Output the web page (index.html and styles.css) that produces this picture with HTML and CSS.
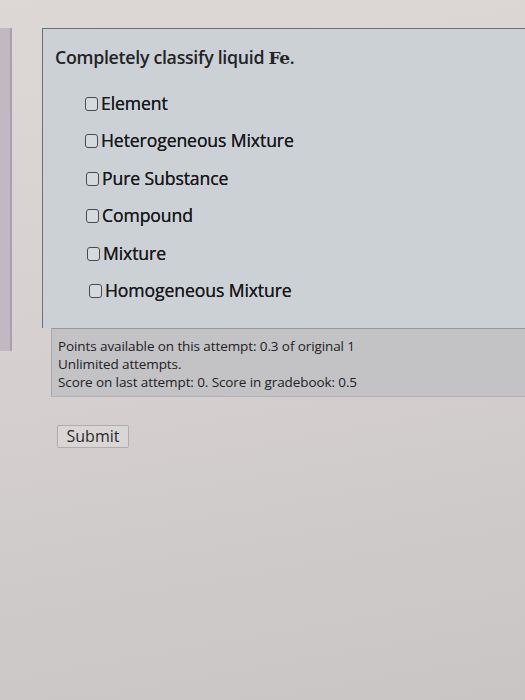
FILE: index.html
```html
<!DOCTYPE html>
<html>
<head>
<meta charset="utf-8">
<link rel="stylesheet" href="styles.css">
</head>
<body>
<div class="page">
  <div class="side"></div>
  <div class="main">
    <section class="question">
      <h1 class="title">Completely classify liquid <span class="math">Fe</span>.</h1>
      <ul class="options">
        <li class="opt"><span class="box"></span>Element</li>
        <li class="opt"><span class="box"></span>Heterogeneous Mixture</li>
        <li class="opt"><span class="box"></span>Pure Substance</li>
        <li class="opt"><span class="box"></span>Compound</li>
        <li class="opt"><span class="box"></span>Mixture</li>
        <li class="opt"><span class="box"></span>Homogeneous Mixture</li>
      </ul>
    </section>
    <div class="points">
      <div>Points available on this attempt: 0.3 of original 1</div>
      <div>Unlimited attempts.</div>
      <div>Score on last attempt: 0. Score in gradebook: 0.5</div>
    </div>
    <button class="submit">Submit</button>
  </div>
</div>
</body>
</html>
```
FILE: styles.css
```css
html, body {
  margin: 0;
  padding: 0;
}
body {
  width: 525px;
  height: 700px;
  overflow: hidden;
  font-family: "Open Sans", "Noto Sans", sans-serif;
  color: #222;
  background: linear-gradient(170deg, #ddd8d6 0%, #d6d1d0 45%, #c9c5c5 100%);
}
.page {
  display: flex;
  padding-top: 28px;
}
.side {
  flex: none;
  width: 10px;
  height: 323px;
  background: #c1b9c2;
  border-right: 2px solid #a99fae;
}
.main {
  flex: 1;
  margin-left: 30px;
  display: flex;
  flex-direction: column;
  align-items: flex-start;
}
.question {
  align-self: stretch;
  height: 300px;
  box-sizing: border-box;
  background: #cbd1d4;
  border-top: 1px solid #6e7072;
  border-left: 1px solid #6e7072;
  padding: 16px 0 0 12px;
}
.title {
  margin: 0;
  font-size: 17.8px;
  font-weight: 600;
  line-height: 24px;
  color: #232427;
  letter-spacing: -0.3px;
}
.math {
  font-family: "DejaVu Serif", "Liberation Serif", serif;
  font-weight: 700;
  font-size: 17px;
}
.options {
  list-style: none;
  margin: 21px 0 0 30px;
  padding: 0;
  display: flex;
  flex-direction: column;
  gap: 13.4px;
}
.opt {
  display: flex;
  align-items: center;
  font-size: 17.6px;
  line-height: 24px;
  color: #18191c;
  letter-spacing: -0.1px;
  text-shadow: 0 0 0.4px #18191c;
}
.opt:nth-child(3), .opt:nth-child(4) { margin-left: 1px; }
.opt:nth-child(5) { margin-left: 2px; }
.opt:nth-child(6) { margin-left: 4px; }
.box {
  flex: none;
  width: 11px;
  height: 12px;
  border: 1.5px solid #4a4a4c;
  border-radius: 3px;
  background: #d6dadc;
  margin-right: 3px;
  margin-top: 2px;
}
.points {
  align-self: stretch;
  margin-left: 9px;
  height: 69px;
  box-sizing: border-box;
  background: #c3c2c4;
  border-top: 1px solid #99989b;
  border-left: 1px solid #aaa9ab;
  border-bottom: 1px solid #b3b1b2;
  padding: 8px 0 0 6px;
  font-size: 13.5px;
  line-height: 18px;
  color: #222225;
  letter-spacing: -0.1px;
}
.submit {
  margin: 28px 0 0 15px;
  width: 72px;
  height: 23px;
  padding: 0;
  font-family: "Open Sans", "Noto Sans", sans-serif;
  font-size: 16px;
  line-height: 21px;
  color: #2a2a2c;
  background: #d9d6d5;
  border: 1px solid #b0adae;
  border-radius: 2px;
}
```
